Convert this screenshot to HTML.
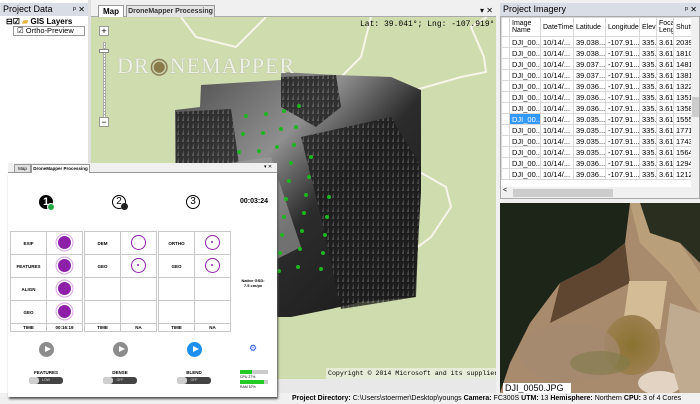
<!DOCTYPE html>
<html><head><style>
*{margin:0;padding:0;box-sizing:border-box}
body{width:700px;height:404px;overflow:hidden;background:#f0f0f0;font-family:"Liberation Sans",sans-serif;position:relative;font-size:8px;color:#000}
.a{position:absolute}
.hdr{background:#d9dde6;font-size:9px;height:13px;line-height:13px;padding-left:3px;color:#000}
table{border-collapse:collapse}
.g td{border:1px solid #c8c8c8;text-align:center;font-size:4.5px;font-weight:bold;height:23px;width:36px}
.g tr.t td{height:8px}
.dot{display:inline-block;width:13px;height:13px;border-radius:50%;background:#8e1fa8;box-shadow:0 0 0 1.5px #fff,0 0 0 2.5px #d9a4e4}
.ring{display:inline-block;width:15px;height:15px;border-radius:50%;border:1.5px solid #8e1fa8;position:relative}
.ring.p:after{content:"";position:absolute;left:5px;top:5px;width:2px;height:2px;background:#8e1fa8;border-radius:50%}
.it td{border:1px solid #d8d8d8;font-size:7.5px;height:11px;padding-left:2px;white-space:nowrap;overflow:hidden}
.play{width:15px;height:15px;border-radius:50%;background:#8c8c8c}
.play:after{content:"";position:absolute;left:6px;top:4px;border-left:6px solid #fff;border-top:3.5px solid transparent;border-bottom:3.5px solid transparent}
.tog{width:34px;height:7px;border-radius:3px;background:#444;font-size:3.5px;color:#ddd;text-align:center;line-height:7px}
.tog:before{content:"";position:absolute;left:0;top:0;width:10px;height:7px;border-radius:3px;background:#cfcfcf}
.lbl{font-size:4.5px;font-weight:bold;width:50px;text-align:center}
</style></head><body>
<div class="a" style="left:0;top:0;width:88px;height:393px;background:#fff"></div>
<div class="a hdr" style="left:0;top:3px;width:88px">Project Data<span style="float:right;margin-right:3px;font-size:8px">ᵖ ✕</span></div>
<div class="a" style="left:6px;top:17px;font-size:8px;font-weight:bold">⊟☑ <span style="color:#e8b53a">▰</span> GIS Layers</div>
<div class="a" style="left:13px;top:26px;width:72px;height:10px;border:1px solid #999;font-size:7.5px;line-height:8px;padding-left:3px">☑ Ortho-Preview</div>
<div class="a" style="left:88px;top:0;width:3px;height:393px;background:#e0e0e0"></div>
<div class="a" style="left:91px;top:3px;width:405px;height:14px;background:#f0f0f0;border-bottom:1px solid #aaa"></div>
<div class="a" style="left:98px;top:5px;width:26px;height:12px;background:#fff;border:1px solid #999;border-bottom:none;font-size:8px;font-weight:bold;text-align:center;line-height:11px">Map</div>
<div class="a" style="left:126px;top:5px;width:89px;height:12px;background:#e4e4e4;border:1px solid #999;border-bottom:none;font-size:7px;font-weight:bold;text-align:center;line-height:11px;color:#333;white-space:nowrap;overflow:hidden">DroneMapper Processing</div>
<div class="a" style="left:480px;top:6px;font-size:8px">▾ ✕</div>
<div class="a" style="left:91px;top:17px;width:405px;height:362px;background:#cfdcae;overflow:hidden">
<svg width="405" height="362" style="position:absolute;left:0;top:0">
<g fill="none" stroke="#f7f5ea" stroke-width="2">
<path d="M90 0 L105 20 L145 30 L165 10 L175 0"/>
<path d="M280 0 L270 40 L250 60"/>
<path d="M396 0 L380 10 L393 40 L395 55 L370 60 L300 80"/>
<path d="M320 150 L355 170 L360 190 L340 220 L300 250"/>
<path d="M230 250 L165 290 L110 268 L80 270"/>
</g>
<defs><linearGradient id="og" x1="0" y1="0" x2="1" y2="1"><stop offset="0" stop-color="#4a4a4a"/><stop offset=".35" stop-color="#8f8f8f"/><stop offset=".55" stop-color="#2c2c2c"/><stop offset="1" stop-color="#161616"/></linearGradient>
<pattern id="tr" width="5" height="7" patternUnits="userSpaceOnUse"><rect width="5" height="7" fill="#1c1c1c"/><path d="M1 6 L2.5 0 L3 6Z" fill="#5a5a5a"/></pattern></defs>
<path d="M110 68 L190 63 L190 55 L245 58 L300 60 L330 73 L330 175 L324 280 L270 285 L240 292 L200 300 L150 300 L85 306 L84 93 L109 90Z" fill="url(#og)"/>
<path d="M85 95 L140 92 L150 160 L120 210 L85 220Z" fill="url(#tr)" opacity=".75"/>
<path d="M190 60 L245 58 L250 90 L225 110 L190 90Z" fill="url(#tr)" opacity=".8"/>
<path d="M210 120 L300 100 L330 150 L325 280 L250 292 L230 200Z" fill="url(#tr)" opacity=".8"/>
<path d="M110 150 L180 140 L210 230 L150 260 L95 250Z" fill="#a0a0a0" opacity=".6"/>
<g fill="#1fb51f">
<circle cx="155" cy="99" r="2"/><circle cx="175" cy="97" r="2"/><circle cx="193" cy="94" r="2"/><circle cx="208" cy="89" r="2"/>
<circle cx="152" cy="117" r="2"/><circle cx="172" cy="116" r="2"/><circle cx="190" cy="112" r="2"/><circle cx="205" cy="110" r="2"/>
<circle cx="148" cy="135" r="2"/><circle cx="168" cy="134" r="2"/><circle cx="186" cy="130" r="2"/><circle cx="203" cy="128" r="2"/>
<circle cx="145" cy="153" r="2"/><circle cx="165" cy="153" r="2"/><circle cx="183" cy="150" r="2"/><circle cx="200" cy="146" r="2"/><circle cx="220" cy="140" r="2"/>
<circle cx="142" cy="171" r="2"/><circle cx="162" cy="170" r="2"/><circle cx="180" cy="168" r="2"/><circle cx="198" cy="164" r="2"/><circle cx="218" cy="160" r="2"/>
<circle cx="140" cy="190" r="2"/><circle cx="159" cy="189" r="2"/><circle cx="177" cy="186" r="2"/><circle cx="195" cy="182" r="2"/><circle cx="215" cy="178" r="2"/><circle cx="238" cy="180" r="2"/>
<circle cx="157" cy="207" r="2"/><circle cx="175" cy="204" r="2"/><circle cx="193" cy="200" r="2"/><circle cx="213" cy="196" r="2"/><circle cx="236" cy="200" r="2"/>
<circle cx="155" cy="225" r="2"/><circle cx="173" cy="222" r="2"/><circle cx="191" cy="218" r="2"/><circle cx="211" cy="214" r="2"/><circle cx="234" cy="218" r="2"/>
<circle cx="153" cy="243" r="2"/><circle cx="171" cy="240" r="2"/><circle cx="189" cy="236" r="2"/><circle cx="209" cy="232" r="2"/><circle cx="232" cy="236" r="2"/>
<circle cx="188" cy="254" r="2"/><circle cx="207" cy="250" r="2"/><circle cx="230" cy="252" r="2"/>
</g>
</svg>
<div class="a" style="left:26px;top:36px;font-size:22px;font-family:'Liberation Serif',serif;color:#eef1e4;letter-spacing:1px;text-shadow:0 0 1px #999">DR<span style="color:#8a7a4a">◉</span>NEMAPPER</div>
<div class="a" style="left:8px;top:9px;width:10px;height:10px;background:#fff;border:1px solid #999;font-size:9px;line-height:8px;text-align:center">+</div>
<div class="a" style="left:12px;top:25px;width:3px;height:78px;background:repeating-linear-gradient(#fff 0 2px,#aaa 2px 3px);border:1px solid #aaa"></div>
<div class="a" style="left:8px;top:32px;width:10px;height:4px;background:#fff;border:1px solid #888"></div>
<div class="a" style="left:8px;top:100px;width:10px;height:10px;background:#fff;border:1px solid #999;font-size:9px;line-height:8px;text-align:center">−</div>
<div class="a" style="left:235px;top:351px;width:170px;height:11px;background:#e6ecd8;font-family:'Liberation Mono',monospace;font-size:6.6px;line-height:11px;padding-left:2px;white-space:nowrap">Copyright © 2014 Microsoft and its suppliers</div>
</div>
<div class="a" style="left:360px;top:20px;font-family:'Liberation Mono',monospace;font-size:8px">Lat: 39.041°; Lng: -107.919°</div>
<div class="a" style="left:91px;top:379px;width:405px;height:14px;background:#e8e8e8"></div>
<div class="a hdr" style="left:500px;top:3px;width:200px">Project Imagery<span style="float:right;margin-right:3px;font-size:8px">ᵖ ✕</span></div>
<div class="a" style="left:500px;top:16px;width:200px;height:183px;background:#fff;border:1px solid #aaa;overflow:hidden">
<table class="it" style="position:absolute;left:0;top:0;width:190px;table-layout:fixed">
<colgroup><col style="width:8px"><col style="width:31px"><col style="width:33px"><col style="width:32px"><col style="width:34px"><col style="width:17px"><col style="width:17px"><col style="width:18px"></colgroup>
<tr style="height:19px"><td></td><td style="font-size:7px;line-height:7px;white-space:normal">Image Name</td><td style="font-size:7px">DateTimeO</td><td style="font-size:7px">Latitude</td><td style="font-size:7px">Longitude</td><td style="font-size:7px">Elevat</td><td style="font-size:7px;line-height:7px;white-space:normal">Focal Lengt</td><td style="font-size:7px">Shutt</td></tr>
<tr><td></td><td>DJI_00...</td><td>10/14/...</td><td>39.038...</td><td>-107.91...</td><td>335...</td><td>3.61</td><td>2039.</td></tr>
<tr><td></td><td>DJI_00...</td><td>10/14/...</td><td>39.038...</td><td>-107.91...</td><td>335...</td><td>3.61</td><td>1810.</td></tr>
<tr><td></td><td>DJI_00...</td><td>10/14/...</td><td>39.037...</td><td>-107.91...</td><td>335...</td><td>3.61</td><td>1481.</td></tr>
<tr><td></td><td>DJI_00...</td><td>10/14/...</td><td>39.037...</td><td>-107.91...</td><td>335...</td><td>3.61</td><td>1381.</td></tr>
<tr><td></td><td>DJI_00...</td><td>10/14/...</td><td>39.036...</td><td>-107.91...</td><td>335...</td><td>3.61</td><td>1322.</td></tr>
<tr><td></td><td>DJI_00...</td><td>10/14/...</td><td>39.036...</td><td>-107.91...</td><td>335...</td><td>3.61</td><td>1351.</td></tr>
<tr><td></td><td>DJI_00...</td><td>10/14/...</td><td>39.036...</td><td>-107.91...</td><td>335...</td><td>3.61</td><td>1358.</td></tr>
<tr><td></td><td style="background:#3399ff;color:#fff">DJI_00...</td><td>10/14/...</td><td>39.035...</td><td>-107.91...</td><td>335...</td><td>3.61</td><td>1555.</td></tr>
<tr><td></td><td>DJI_00...</td><td>10/14/...</td><td>39.035...</td><td>-107.91...</td><td>335...</td><td>3.61</td><td>1771.</td></tr>
<tr><td></td><td>DJI_00...</td><td>10/14/...</td><td>39.035...</td><td>-107.91...</td><td>335...</td><td>3.61</td><td>1743.</td></tr>
<tr><td></td><td>DJI_00...</td><td>10/14/...</td><td>39.035...</td><td>-107.91...</td><td>335...</td><td>3.61</td><td>1564.</td></tr>
<tr><td></td><td>DJI_00...</td><td>10/14/...</td><td>39.036...</td><td>-107.91...</td><td>335...</td><td>3.61</td><td>1294.</td></tr>
<tr><td></td><td>DJI_00...</td><td>10/14/...</td><td>39.036...</td><td>-107.91...</td><td>335...</td><td>3.61</td><td>1212.</td></tr>
</table>
<div class="a" style="left:190px;top:0;width:9px;height:170px;background:#f0f0f0"><div class="a" style="left:1px;top:80px;width:7px;height:20px;background:#ccc"></div></div>
<div class="a" style="left:0;top:170px;width:199px;height:12px;background:#f0f0f0;font-size:7px;padding-left:2px">&lt;<div class="a" style="left:12px;top:2px;width:100px;height:8px;background:#ccc"></div></div>
</div>
<div class="a" style="left:500px;top:203px;width:200px;height:190px;overflow:hidden;background:#a48462">
<svg width="200" height="190" style="position:absolute;left:0;top:0">
<defs><radialGradient id="w" cx=".5" cy=".5" r=".5"><stop offset="0" stop-color="#8a7230"/><stop offset="1" stop-color="#9c8050"/></radialGradient></defs>
<rect width="200" height="190" fill="#a88a6c"/>
<path d="M0 0 L130 0 L125 40 L100 60 L60 80 L30 120 L10 160 L0 190Z" fill="#1d2418"/>
<path d="M60 80 L100 60 L125 40 L130 80 L90 100 L50 120Z" fill="#5e4630"/>
<path d="M140 0 L200 0 L200 60 L180 40 L150 30Z" fill="#2a2e1e"/>
<path d="M130 0 L140 0 L150 30 L180 40 L200 70 L200 110 L170 70 L140 40Z" fill="#b9a07a"/>
<rect x="140" y="78" width="38" height="48" fill="#d4bc96" transform="skewX(-8)"/>
<ellipse cx="132" cy="142" rx="28" ry="30" fill="url(#w)"/>
<ellipse cx="70" cy="150" rx="50" ry="30" fill="#a48a72" opacity=".7"/>
<ellipse cx="100" cy="160" rx="30" ry="12" fill="#7e7a48" opacity=".6"/>
<ellipse cx="160" cy="180" rx="22" ry="12" fill="#e2d3c2"/>
<path d="M170 100 L200 110 L200 190 L180 190 L165 140Z" fill="#c0aa90"/>
</svg>
<div class="a" style="left:3px;top:180px;width:68px;height:11px;background:#fff;font-size:9px;line-height:11px;padding-left:2px">DJI_0050.JPG</div>
</div>
<div class="a" style="left:0;top:393px;width:700px;height:11px;background:#f0f0f0;font-size:7px;line-height:11px;padding-left:292px;white-space:nowrap;overflow:hidden"><b>Project Directory:</b> C:\Users\stoermer\Desktop\youngs <b>Camera:</b> FC300S <b>UTM:</b> 13 <b>Hemisphere:</b> Northern <b>CPU:</b> 3 of 4 Cores</div>
<div class="a" style="left:8px;top:163px;width:269px;height:10px;background:#f0f0f0;border-bottom:1px solid #999"></div>
<div class="a" style="left:14px;top:164px;width:17px;height:9px;background:#e0e0e0;border:1px solid #999;font-size:4.5px;line-height:8px;text-align:center">Map</div>
<div class="a" style="left:31px;top:164px;width:59px;height:9px;background:#fff;border:1px solid #999;border-bottom:none;font-size:4.5px;font-weight:bold;line-height:8px;text-align:center">DroneMapper Processing</div>
<div class="a" style="left:264px;top:164px;font-size:5px">▾ ✕</div>
<div class="a" style="left:8px;top:173px;width:269px;height:224px;background:#fff;box-shadow:1px 2px 2px #555"></div>
<div class="a" style="left:39px;top:195px;width:14px;height:14px;border-radius:50%;background:#000;color:#fff;font-size:11px;font-weight:bold;text-align:center;line-height:14px">1</div>
<div class="a" style="left:47px;top:203px;width:8px;height:8px;border-radius:50%;background:#22aa44;border:1px solid #fff"></div>
<div class="a" style="left:112px;top:195px;width:14px;height:14px;border-radius:50%;border:1.3px solid #000;font-size:10px;text-align:center;line-height:12px">2</div>
<div class="a" style="left:121px;top:203px;width:7px;height:7px;border-radius:50%;background:#222"></div>
<div class="a" style="left:186px;top:195px;width:14px;height:14px;border-radius:50%;border:1.3px solid #000;font-size:10px;text-align:center;line-height:12px">3</div>
<div class="a" style="left:240px;top:198px;font-size:7px;font-weight:bold">00:03:24</div>
<table class="g a" style="left:10px;top:231px">
<tr><td>EXIF</td><td><span class="dot"></span></td></tr><tr><td>FEATURES</td><td><span class="dot"></span></td></tr><tr><td>ALIGN</td><td><span class="dot"></span></td></tr><tr><td>GEO</td><td><span class="dot"></span></td></tr><tr class="t"><td>TIME</td><td>00:16:19</td></tr></table>
<table class="g a" style="left:84px;top:231px">
<tr><td>DEM</td><td><span class="ring"></span></td></tr><tr><td>GEO</td><td><span class="ring p"></span></td></tr><tr><td></td><td></td></tr><tr><td></td><td></td></tr><tr class="t"><td>TIME</td><td>NA</td></tr></table>
<table class="g a" style="left:158px;top:231px">
<tr><td>ORTHO</td><td><span class="ring p"></span></td></tr><tr><td>GEO</td><td><span class="ring p"></span></td></tr><tr><td></td><td></td></tr><tr><td></td><td></td></tr><tr class="t"><td>TIME</td><td>NA</td></tr></table>
<div class="a" style="left:238px;top:278px;width:30px;font-size:4px;font-weight:bold;text-align:center">Native GSD:<br>7.5 cm/px</div>
<div class="a play" style="left:39px;top:342px"></div>
<div class="a play" style="left:113px;top:342px"></div>
<div class="a play" style="left:187px;top:342px;background:#1e90f0"></div>
<div class="a" style="left:249px;top:343px;color:#2255dd;font-size:9px">⚙</div>
<div class="a lbl" style="left:21px;top:370px">FEATURES</div>
<div class="a lbl" style="left:95px;top:370px">DENSE</div>
<div class="a lbl" style="left:169px;top:370px">BLEND</div>
<div class="a tog" style="left:29px;top:377px">LOW</div>
<div class="a tog" style="left:103px;top:377px">OFF</div>
<div class="a tog" style="left:177px;top:377px">OFF</div>
<div class="a" style="left:240px;top:370px;width:28px;height:4px;background:#ccc"><div style="width:12px;height:4px;background:#22cc22"></div></div>
<div class="a" style="left:240px;top:375px;font-size:3.5px">CPU 27%</div>
<div class="a" style="left:240px;top:380px;width:28px;height:4px;background:#ccc"><div style="width:24px;height:4px;background:#22cc22"></div></div>
<div class="a" style="left:240px;top:385px;font-size:3.5px">RAM 57%</div>
</body></html>
